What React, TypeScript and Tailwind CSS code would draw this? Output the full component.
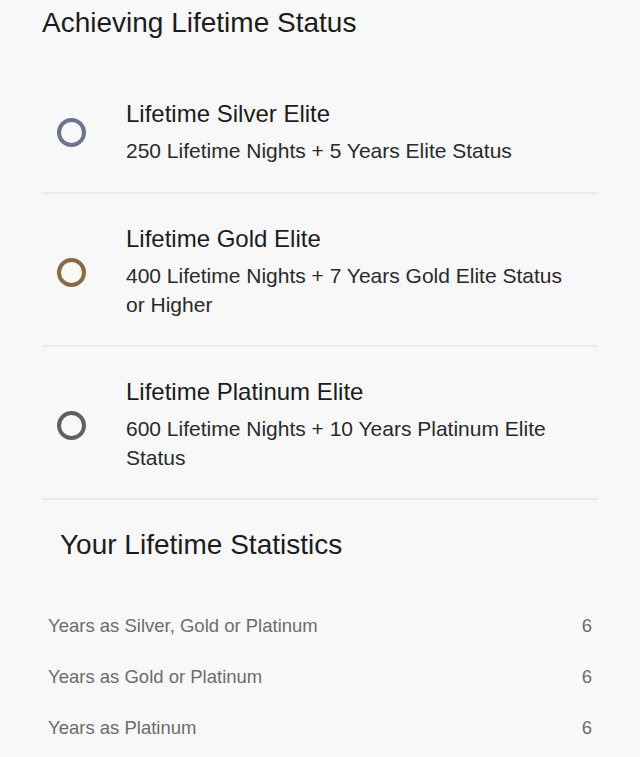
import React from "react";

type Tier = {
  name: string;
  requirement: string;
  ring: string;
};

const tiers: Tier[] = [
  {
    name: "Lifetime Silver Elite",
    requirement: "250 Lifetime Nights + 5 Years Elite Status",
    ring: "border-[#6f7290]",
  },
  {
    name: "Lifetime Gold Elite",
    requirement: "400 Lifetime Nights + 7 Years Gold Elite Status or Higher",
    ring: "border-[#8a6a40]",
  },
  {
    name: "Lifetime Platinum Elite",
    requirement: "600 Lifetime Nights + 10 Years Platinum Elite Status",
    ring: "border-[#606064]",
  },
];

const stats = [
  { label: "Years as Silver, Gold or Platinum", value: "6" },
  { label: "Years as Gold or Platinum", value: "6" },
  { label: "Years as Platinum", value: "6" },
];

export default function App() {
  return (
    <div
      className="min-h-[757px] w-[640px] bg-[#f8f8f8] text-[#1c1c1c] antialiased"
      style={{ fontFamily: '"Liberation Sans", Arial, sans-serif' }}
    >
      <div className="px-[42px] pt-[6px]">
        <h1 className="text-[28px] leading-[33px] font-normal">
          Achieving Lifetime Status
        </h1>

        <ul className="mt-[46px]">
          {tiers.map((t, i) => (
            <li
              key={t.name}
              className={`flex items-center border-b-2 border-[#ececec] ${
                i === 0 ? "pt-[15px] pb-[27px]" : "pt-[31px] pb-[26px]"
              }`}
            >
              <div className="flex w-[84px] shrink-0 pl-[15px]">
                <span
                  className={`block h-[29px] w-[29px] rounded-full border-[4px] ${t.ring}`}
                />
              </div>
              <div className="pr-[20px]">
                <div className="text-[24px] leading-[28px]">{t.name}</div>
                <div className="mt-[8px] text-[21px] leading-[29px] text-[#2a2a2a]">
                  {t.requirement}
                </div>
              </div>
            </li>
          ))}
        </ul>
      </div>

      <h2 className="mt-[28px] pl-[60px] text-[28px] leading-[33px] font-normal">
        Your Lifetime Statistics
      </h2>

      <dl className="mt-[54px] pl-[48px] pr-[48px]">
        {stats.map((s) => (
          <div
            key={s.label}
            className="flex h-[51px] items-start justify-between text-[18.5px] leading-[22px] text-[#6c6c6c]"
          >
            <dt>{s.label}</dt>
            <dd>{s.value}</dd>
          </div>
        ))}
      </dl>
    </div>
  );
}
